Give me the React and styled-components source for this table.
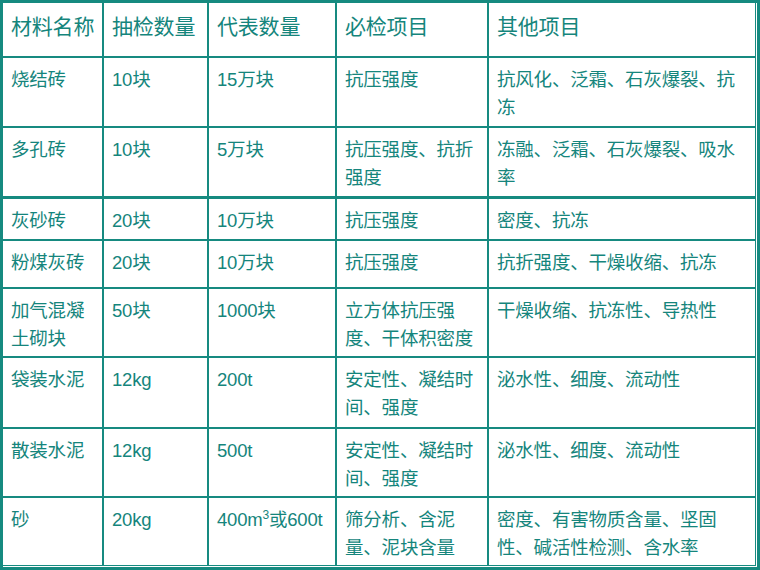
import React from "react";
import styled, { createGlobalStyle } from "styled-components";

const TEAL = "#168a80";
const INK = "#15857c";

const Global = createGlobalStyle`
  html, body { margin: 0; padding: 0; background: #ffffff; }
  body { font-family: "Liberation Sans", "Noto Sans CJK SC", sans-serif; }
`;

const Frame = styled.div`
  box-sizing: border-box;
  width: 760px;
  height: 570px;
  border: 3px solid ${TEAL};
  padding: 0 2px 2px 0;
  background: #ffffff;
`;

const Table = styled.table`
  border-collapse: collapse;
  table-layout: fixed;
  width: 100%;
  color: ${INK};
  font-family: "Liberation Sans", "Noto Sans CJK SC", sans-serif;
`;

const Row = styled.tr`
  height: ${(p) => p.$h}px;
`;

const Cell = styled.td`
  box-sizing: border-box;
  border: 2px solid ${TEAL};
  border-top-width: ${(p) => (p.$thick ? 3 : 2)}px;
  padding: 8px 4px 0 8px;
  vertical-align: top;
  font-size: 18.5px;
  line-height: 28px;
  letter-spacing: -0.2px;
  tr:first-child > & { border-top: none; }
  &:first-child { border-left: none; }
  &:last-child { border-right-width: 1px; }
  tr:last-child > & { border-bottom-width: 1px; }
`;

const HeadCell = styled(Cell).attrs({ as: "th" })`
  font-weight: normal;
  text-align: left;
  font-size: 21px;
  vertical-align: middle;
  padding: 0 4px 6px 8px;
`;

const Sup = styled.sup`
  font-size: 12px;
  line-height: 0;
  vertical-align: 7px;
`;

const cols = [100, 105, 128, 152, 267];
const heights = [70, 70, 43, 48, 69, 71, 69, 68];

const rows = [
  ["烧结砖", "10块", "15万块", "抗压强度", "抗风化、泛霜、石灰爆裂、抗冻"],
  ["多孔砖", "10块", "5万块", "抗压强度、抗折强度", "冻融、泛霜、石灰爆裂、吸水率"],
  ["灰砂砖", "20块", "10万块", "抗压强度", "密度、抗冻"],
  ["粉煤灰砖", "20块", "10万块", "抗压强度", "抗折强度、干燥收缩、抗冻"],
  ["加气混凝土砌块", "50块", "1000块", "立方体抗压强度、干体积密度", "干燥收缩、抗冻性、导热性"],
  ["袋装水泥", "12kg", "200t", "安定性、凝结时间、强度", "泌水性、细度、流动性"],
  ["散装水泥", "12kg", "500t", "安定性、凝结时间、强度", "泌水性、细度、流动性"],
  [
    "砂",
    "20kg",
    <>
      400m<Sup>3</Sup>或600t
    </>,
    "筛分析、含泥量、泥块含量",
    "密度、有害物质含量、坚固性、碱活性检测、含水率",
  ],
];

const headers = ["材料名称", "抽检数量", "代表数量", "必检项目", "其他项目"];

export default function App() {
  return (
    <>
      <Global />
      <Frame>
        <Table>
          <colgroup>
            {cols.map((w, i) => (
              <col key={i} style={{ width: w }} />
            ))}
          </colgroup>
          <tbody>
            <Row $h={54}>
              {headers.map((h) => (
                <HeadCell key={h}>{h}</HeadCell>
              ))}
            </Row>
            {rows.map((r, i) => (
              <Row key={i} $h={heights[i]}>
                {r.map((c, j) => (
                  <Cell key={j} $thick={i === 2}>
                    {c}
                  </Cell>
                ))}
              </Row>
            ))}
          </tbody>
        </Table>
      </Frame>
    </>
  );
}
